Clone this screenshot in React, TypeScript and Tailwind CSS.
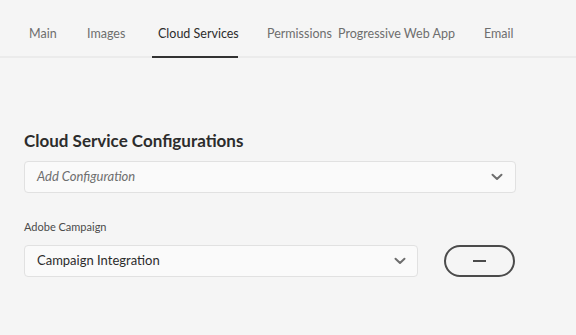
import React from "react";

const Chevron = () => (
  <svg width="12" height="8" viewBox="0 0 12 8" fill="none">
    <path d="M1.5 1.8 L6 6 L10.5 1.8" stroke="#6e6e6e" strokeWidth="2" strokeLinecap="round" strokeLinejoin="round" />
  </svg>
);

export default function App() {
  return (
    <div className="w-[576px] h-[335px] bg-[#f5f5f5] text-[#4b4b4b]" style={{ fontFamily: 'Lato, "Noto Sans", sans-serif' }}>
      <div className="flex h-[58px] border-b-2 border-[#ebebeb] pl-[29px] text-[12.5px] text-[#6e6e6e]">
        <div className="w-[58px] pt-[25px] leading-[18px]">Main</div>
        <div className="w-[65px] pt-[25px] leading-[18px]">Images</div>
        <div className="w-[115px] flex flex-col">
          <div className="pt-[25px] pl-[6px] leading-[18px] text-[#2c2c2c] whitespace-nowrap">Cloud Services</div>
          <div className="mt-auto w-[86px] h-[2px] bg-[#323232] mb-[-2px]" />
        </div>
        <div className="w-[71px] pt-[25px] leading-[18px] whitespace-nowrap">Permissions</div>
        <div className="w-[146px] pt-[25px] leading-[18px] whitespace-nowrap">Progressive Web App</div>
        <div className="pt-[25px] leading-[18px]">Email</div>
      </div>

      <div className="pl-[24px] pt-[72px]">
        <div className="text-[17px] font-bold leading-[22px] text-[#2c2c2c]">Cloud Service Configurations</div>
        <div className="mt-[9px] w-[492px] h-[32px] rounded-[4px] border border-[#e1e1e1] bg-[#fafafa] flex items-center pl-[12px] pr-[12px]">
          <span className="italic text-[13px] text-[#6e6e6e] flex-1">Add Configuration</span>
          <Chevron />
        </div>

        <div className="mt-[27px] text-[11px] leading-[14px] text-[#4b4b4b]">Adobe Campaign</div>
        <div className="mt-[11px] flex items-center">
          <div className="w-[394px] h-[32px] rounded-[4px] border border-[#e1e1e1] bg-[#fafafa] flex items-center pl-[12px] pr-[11px]">
            <span className="text-[13px] text-[#2c2c2c] flex-1">Campaign Integration</span>
            <Chevron />
          </div>
          <div className="ml-[26px] w-[71px] h-[32px] rounded-full border-2 border-[#4b4b4b] flex items-center justify-center">
            <div className="w-[13px] h-[2px] bg-[#4b4b4b]" />
          </div>
        </div>
      </div>
    </div>
  );
}
